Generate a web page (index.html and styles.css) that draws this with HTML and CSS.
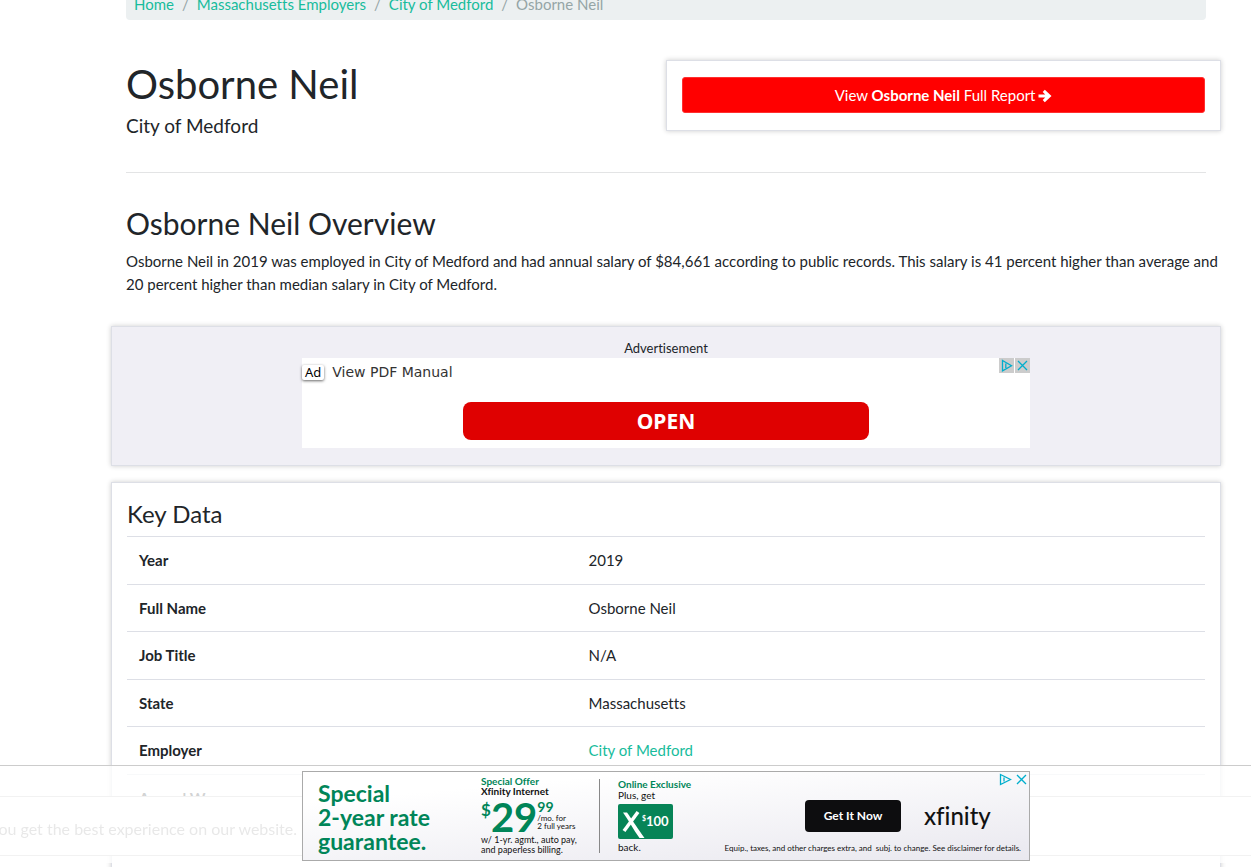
FILE: index.html
```html
<!DOCTYPE html>
<html lang="en">
<head>
    <meta charset="UTF-8">
    <meta name="viewport" content="width=device-width, initial-scale=1.0">
    <title>Osborne Neil - City of Medford</title>
    <link rel="stylesheet" href="styles.css">
</head>
<body>
    <main class="page">
        <nav class="breadcrumb" aria-label="Breadcrumb">
            <a href="#">Home</a><span class="slash">/</span>
            <a href="#">Massachusetts Employers</a><span class="slash">/</span>
            <a href="#">City of Medford</a><span class="slash">/</span>
            <span class="current">Osborne Neil</span>
        </nav>

        <!-- Name and report link -->
        <header class="title-row">
            <div class="title">
                <h1>Osborne Neil</h1>
                <p class="employer">City of Medford</p>
            </div>
            <div class="card report">
                <a class="btn-report" href="#">View <b>Osborne Neil</b> Full Report
                    <svg width="14" height="14" viewBox="0 0 14 14"><path d="M0.500 5.500H7.200L4.700 3L6.800 0.800L13.500 7L6.800 13.200L4.700 11L7.200 8.500H0.500Z" fill="#fff"/></svg>
                </a>
            </div>
        </header>

        <section class="overview">
            <h2>Osborne Neil Overview</h2>
            <p>Osborne Neil in 2019 was employed in City of Medford and had annual salary of $84,661 according to public records. This salary is 41 percent higher than average and 20 percent higher than median salary in City of Medford.</p>
        </section>

        <!-- Advertisement -->
        <aside class="card ad-card">
            <div class="ad-label">Advertisement</div>
            <div class="pdf-ad">
                <div class="pdf-head"><span class="ad-badge">Ad</span><span>View PDF Manual</span></div>
                <button class="btn-open" type="button">OPEN</button>
                <div class="ad-choices">
                    <button type="button" aria-label="Ad choices"><svg width="15" height="15" viewBox="0 0 15 15"><path d="M3.500 2.500L12.500 7.800L3.500 12.800ZM6.800 5.600V10"/></svg></button>
                    <button type="button" aria-label="Close ad"><svg width="15" height="15" viewBox="0 0 15 15"><path d="M3 3L12 12M12 3L3 12"/></svg></button>
                </div>
            </div>
        </aside>

        <!-- Key data -->
        <section class="card key-data">
            <h3>Key Data</h3>
            <table>
                <tbody>
                    <tr><th scope="row">Year</th><td>2019</td></tr>
                    <tr><th scope="row">Full Name</th><td>Osborne Neil</td></tr>
                    <tr><th scope="row">Job Title</th><td>N/A</td></tr>
                    <tr><th scope="row">State</th><td>Massachusetts</td></tr>
                    <tr><th scope="row">Employer</th><td><a href="#">City of Medford</a></td></tr>
                    <tr><th scope="row">Annual W</th><td></td></tr>
                    <tr><th></th><td></td></tr>
                </tbody>
            </table>
        </section>
    </main>

    <!-- Cookie notice -->
    <div class="cookie-bar"><p>you get the best experience on our website.</p></div>

    <!-- Sticky bottom ad -->
    <div class="sticky-ad">
        <div class="banner">
            <div class="headline">Special<br>2-year rate<br>guarantee.</div>
            <div class="offer">
                <div class="green">Special Offer</div>
                <div class="strong">Xfinity Internet</div>
                <div class="price">
                    <span class="dollar">$</span><span class="amount">29</span>
                    <span class="per"><span class="cents">99</span><span>/mo. for</span><span>2 full years</span></span>
                </div>
                <div class="terms">w/ 1-yr. agmt., auto pay,<br>and paperless billing.</div>
            </div>
            <div class="exclusive">
                <div class="green">Online Exclusive</div>
                <div>Plus, get</div>
                <svg class="gift" width="55" height="35" viewBox="0 0 55 35">
                    <rect width="55" height="35" rx="2" fill="#078457"/>
                    <path d="M5 8.500L9 8.500C13 14 16 19 26.500 34H21.500C15 25 11 17 5 8.500Z"/>
                    <path d="M20 8L6 27" stroke="#fff" stroke-width="3.500"/>
                    <text x="24" y="17" font-size="7">$</text>
                    <text x="28" y="22" font-size="13">100</text>
                </svg>
                <div>back.</div>
            </div>
            <div class="action">
                <div class="action-row">
                    <button class="btn-get" type="button">Get It Now</button>
                    <span class="logo">xfinity</span>
                </div>
                <div class="disclaimer">Equip., taxes, and other charges extra, and&nbsp; subj. to change. See disclaimer for details.</div>
            </div>
            <div class="ad-choices plain">
                <button type="button" aria-label="Ad choices"><svg width="15" height="15" viewBox="0 0 15 15"><path d="M2.500 2.500L12.500 7.500L2.500 12.500ZM6 5.500V9.500"/></svg></button>
                <button type="button" aria-label="Close ad"><svg width="15" height="15" viewBox="0 0 15 15"><path d="M3 3L12 12M12 3L3 12"/></svg></button>
            </div>
        </div>
    </div>
</body>
</html>
```
FILE: styles.css
```css
/* General page */
* {
    box-sizing: border-box;
}

body {
    margin: 0;
    height: 100vh;
    overflow: hidden;
    font-family: Lato, "Liberation Sans", sans-serif;
    font-size: 15px;
    font-variant-ligatures: none;
    line-height: 1.5;
    color: #212529;
    background: #fff;
}

h1, h2, h3, p {
    margin: 0;
    font-weight: 400;
    line-height: 1.2;
}

a {
    color: #18bc9c;
    text-decoration: none;
}

button {
    border: 0;
    padding: 0;
    cursor: pointer;
}

.page {
    margin-top: -27px;
    padding: 0 30px 0 111px;
}

.card {
    border: 1px solid #dddfe6;
    box-shadow: 0 0 5px rgba(0, 0, 0, 0.2);
}

/* Breadcrumb */
.breadcrumb {
    display: flex;
    margin: 0 15px;
    padding: 20px 8px 4px;
    background: #ecf0f1;
    border-radius: 4px;
}

.slash, .current {
    color: #95a5a6;
}

.slash {
    padding: 0 8px;
}

/* Title */
.title-row {
    display: flex;
    align-items: flex-start;
    margin-top: 40px;
}

.title, .report {
    width: 50%;
}

.title {
    padding-left: 15px;
}

h1 {
    font-size: 40px;
    margin-bottom: 7px;
}

.employer {
    font-size: 19px;
}

.report {
    padding: 16px 15px 17px;
}

.btn-report {
    display: block;
    padding: 6px 12px;
    background: #f00;
    border: 1px solid #ff3030;
    border-radius: 3px;
    color: #fff;
    text-align: center;
}

.btn-report svg {
    vertical-align: -2px;
    margin-left: -1px;
}

/* Overview */
.overview {
    margin: 35px 0 31px;
    padding: 0 0 0 15px;
}

.overview::before {
    content: "";
    display: block;
    margin: 0 15px 32px 0;
    border-top: 1px solid #e3e4e5;
}

h2 {
    font-size: 30px;
    margin-bottom: 9px;
}

.overview p {
    line-height: 1.5;
}

/* Ad card */
.ad-card {
    padding: 12px 15px 17px;
    background: #f0eff5;
}

.ad-label {
    font-size: 13px;
    line-height: 19px;
    text-align: center;
}

.pdf-ad {
    position: relative;
    display: flex;
    flex-direction: column;
    align-items: center;
    max-width: 728px;
    height: 90px;
    margin: 0 auto;
    background: #fff;
}

.pdf-head {
    display: flex;
    align-items: center;
    align-self: stretch;
    gap: 8px;
    height: 44px;
    padding-bottom: 16px;
    font: 14px/16px "DejaVu Sans", sans-serif;
    color: #333;
}

.ad-badge {
    padding: 0 3px;
    border-radius: 2px;
    box-shadow: 0 1px 3px rgba(0, 0, 0, 0.6);
    font: 13px/15px "Noto Sans", sans-serif;
    color: #000;
}

.btn-open {
    width: 406px;
    height: 38px;
    border-radius: 8px;
    background: #df0101;
    color: #fff;
    font: bold 21px/30px "Noto Sans", sans-serif;
}

.ad-choices {
    position: absolute;
    top: 0;
    right: 0;
    display: flex;
    gap: 1px;
}

.ad-choices button {
    width: 15px;
    height: 15px;
    background: #ccc;
}

.ad-choices svg {
    display: block;
    fill: none;
    stroke: #00aecd;
    stroke-width: 1.3;
}

.ad-choices.plain button {
    background: none;
}

/* Key data */
.key-data {
    margin-top: 16px;
    padding: 17px 15px;
}

h3 {
    font-size: 24px;
    margin-bottom: 7px;
}

table {
    width: 100%;
    border-collapse: collapse;
}

th, td {
    padding: 12px;
    border-top: 1px solid #dddfe6;
    text-align: left;
}

th {
    width: 41.7%;
}

tr:last-child td {
    height: 48px;
}

/* Cookie notice */
.cookie-bar {
    position: fixed;
    left: 0;
    right: 0;
    bottom: 11px;
    height: 60px;
    border-top: 1px solid #bfbfbf;
    border-bottom: 1px solid #bfbfbf;
    background: #fff;
    color: #8c8c8c;
}

.cookie-bar p {
    display: flex;
    justify-content: flex-end;
    width: 297px;
    overflow: hidden;
    white-space: nowrap;
    font-size: 16px;
    line-height: 64px;
}

/* Sticky bottom ad */
.sticky-ad {
    position: fixed;
    left: 0;
    right: 0;
    bottom: 4px;
    height: 98px;
    padding: 5px 30px 0 111px;
    border-top: 1px solid #ccc;
    background: rgba(255, 255, 255, 0.8);
}

.banner {
    position: relative;
    display: grid;
    grid-template-columns: 163px 118px 95px 1fr;
    max-width: 728px;
    height: 90px;
    margin: 0 auto;
    padding: 4px 8px 0 15px;
    border: 1px solid #aaa;
    background: linear-gradient(175deg, #fff 20%, #e9e8ef);
    color: #111;
    font-size: 10px;
    line-height: 10px;
}

.headline {
    padding-top: 5px;
    color: #008558;
    font: bold 23px/24px Lato, sans-serif;
    white-space: nowrap;
}

.green {
    color: #008558;
    font-weight: bold;
}

.strong {
    font-weight: bold;
}

.price {
    display: flex;
    height: 39px;
    padding-top: 4px;
    color: #008558;
    font-weight: bold;
}

.dollar {
    font-size: 17px;
    line-height: 20px;
}

.amount {
    font-size: 40px;
    line-height: 34px;
}

.per {
    display: flex;
    flex-direction: column;
    color: #111;
    font-size: 8px;
    font-weight: 400;
    line-height: 8px;
    white-space: nowrap;
}

.cents {
    color: #008558;
    font-size: 14px;
    font-weight: bold;
    line-height: 14px;
}

.terms {
    font-size: 9px;
    white-space: nowrap;
}

.exclusive {
    height: 74px;
    margin-top: 3px;
    padding-left: 18px;
    border-left: 1px solid #888;
    white-space: nowrap;
}

.exclusive .green {
    margin-bottom: 1px;
}

.gift {
    display: block;
    margin: 4px 0 3px;
    fill: #fff;
    font-family: Lato, sans-serif;
    font-weight: bold;
}

.action-row {
    display: flex;
    align-items: center;
    gap: 23px;
    padding: 24px 0 0 111px;
}

.btn-get {
    width: 96px;
    height: 32px;
    border-radius: 4px;
    background: #0d0d0f;
    color: #fff;
    font: bold 12px/16px Lato, sans-serif;
}

.logo {
    font-size: 24px;
    font-weight: 500;
    line-height: 32px;
}

.disclaimer {
    display: flex;
    justify-content: flex-end;
    margin-top: 11px;
    white-space: nowrap;
    font-size: 8px;
    line-height: 10px;
}
```
